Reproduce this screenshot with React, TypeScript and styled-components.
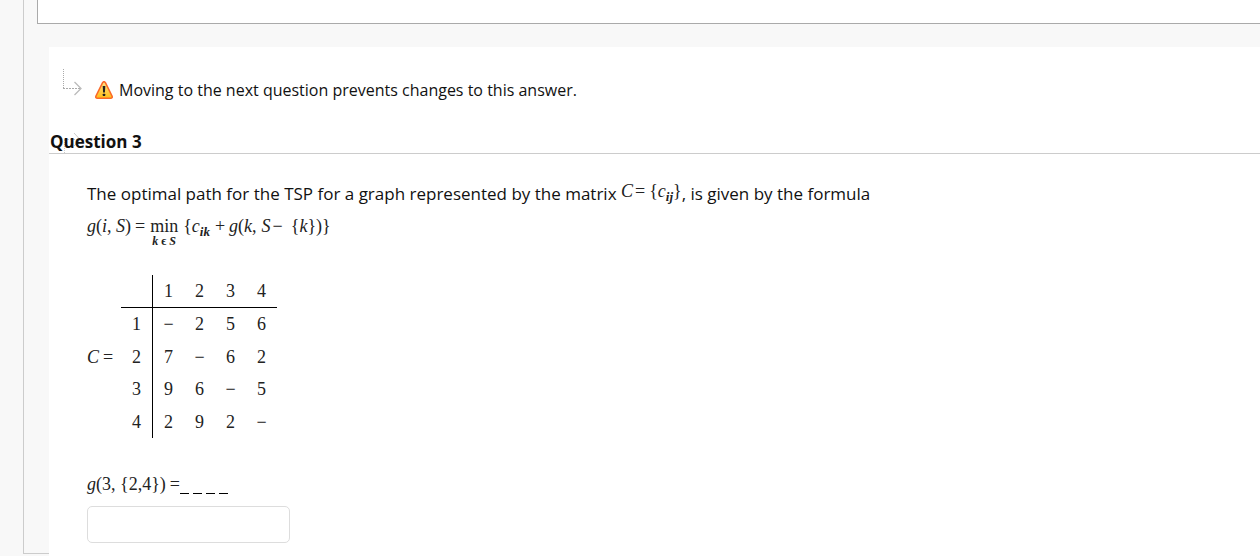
import React from "react";
import styled, { createGlobalStyle } from "styled-components";

const GlobalStyle = createGlobalStyle`
  * { box-sizing: border-box; }
  body {
    margin: 0;
    background: #f8f8f8;
    color: #111;
    font: 16px/24px "Open Sans", sans-serif;
  }
`;

const Page = styled.div`
  padding: 0 0 2px 23px;
  overflow: hidden;
`;

const Frame = styled.main`
  border-left: 1px solid #ccc;
  border-bottom: 1px solid #ccc;
`;

const StatusPanel = styled.section`
  height: 24px;
  margin-left: 13px;
  background: #fff;
  border-left: 1px solid #aaa;
  border-bottom: 1px solid #aaa;
`;

const QuestionCard = styled.section`
  margin: 23px 0 -3px 25px;
  padding-top: 22px;
  background: #fff;
`;

const Notice = styled.div`
  display: flex;
  align-items: flex-start;
  height: 58px;
  padding-left: 13px;
`;

const NoticeText = styled.p`
  display: flex;
  align-items: center;
  gap: 6px;
  margin: 9px 0 0 13px;
`;

const TitleBar = styled.header`
  display: flex;
  align-items: flex-end;
  position: relative;
  height: 27px;
  border-bottom: 1px solid #ccc;
`;

const TitleArrow = styled.svg`
  position: absolute;
  left: 14px;
  bottom: 0;
`;

const Title = styled.h1`
  position: relative;
  margin: 0;
  padding-left: 1px;
  font-size: 17px;
  line-height: 22px;
`;

const Body = styled.div`
  padding: 28px 0 13px 38px;
`;

const Prompt = styled.p`
  margin: 0;
  font-size: 17px;
`;

const MathText = styled.span`
  display: inline-flex;
  align-items: baseline;
  color: #222;
  font: 18px/24px "Liberation Serif", serif;
  white-space: pre;

  sub {
    font-size: 13px;
    font-weight: bold;
    line-height: 12px;
    position: relative;
    top: 4px;
    vertical-align: baseline;
  }
`;

const InlineMath = styled(MathText)`
  position: relative;
  top: -3px;
`;

const Formula = styled.div`
  display: flex;
  height: 30px;
  margin-top: 8px;
`;

const Group = styled.span<{ $before?: number }>`
  margin-left: ${(p) => p.$before ?? 0}px;
`;

const Min = styled.span`
  display: inline-flex;
  flex-direction: column;
  align-items: center;
  margin: 0 5px;

  small {
    margin-top: -2px;
    font-size: 12px;
    font-weight: bold;
    line-height: 10px;
  }
`;

const MatrixRow = styled.div`
  display: flex;
  align-items: center;
  margin-top: 31px;
`;

const MatrixName = styled(MathText)`
  width: 34px;
`;

const Matrix = styled.table`
  border-collapse: separate;
  border-spacing: 0;
  table-layout: fixed;
  width: 156px;
  height: 163px;
  color: #222;
  font: 18px/24px "Liberation Serif", serif;
`;

const Cell = styled.td`
  height: 32px;
  padding: 0;
  text-align: center;
`;

const HeadCell = styled.th<{ $right?: boolean; $bottom?: boolean }>`
  height: ${(p) => (p.$bottom ? 33 : 32)}px;
  width: ${(p) => (p.$right ? 32 : 31)}px;
  padding: 0;
  font-weight: normal;
  border-right: ${(p) => (p.$right ? "1px solid #000" : "0")};
  border-bottom: ${(p) => (p.$bottom ? "1px solid #000" : "0")};
`;

const AnswerLabel = styled.label`
  display: block;
  width: fit-content;
  margin-top: 34px;
`;

const Blank = styled.span`
  display: inline-flex;
  gap: 4px;

  i {
    width: 9px;
    height: 1px;
    background: #000;
    position: relative;
    top: 4px;
  }
`;

const AnswerInput = styled.input`
  display: block;
  width: 203px;
  height: 37px;
  margin-top: 10px;
  padding: 0 10px;
  background: #fff;
  border: 1px solid #ddd;
  border-radius: 5px;
  font: inherit;
`;

const digits = [1, 2, 3, 4];
const costs = [
  ["−", 2, 5, 6],
  [7, "−", 6, 2],
  [9, 6, "−", 5],
  [2, 9, 2, "−"],
];

const DownArrow = () => (
  <svg width="20" height="28" viewBox="0 0 20 28" fill="none" stroke="#aaa" aria-hidden="true">
    <path d="M1.500 0V20" strokeDasharray="1 1" />
    <path d="M1 19.500H18" strokeDasharray="2 1" />
    <path d="M12.500 13L19 19.500L12.500 26" stroke="#bbb" strokeWidth="1.300" />
  </svg>
);

const WarningIcon = () => (
  <svg width="18" height="18" viewBox="0 0 18 18" role="img" aria-label="Warning">
    <defs>
      <linearGradient id="warn" x1="0" y1="0" x2="0" y2="1">
        <stop offset="0" stopColor="#ffe58a" />
        <stop offset="1" stopColor="#ffbd16" />
      </linearGradient>
    </defs>
    <path
      d="M7.600 1.700Q9-.300 10.400 1.700L17 15Q17.800 17.200 15.600 17.200H2.400Q.200 17.200 1 15Z"
      fill="url(#warn)"
      stroke="#fb6a28"
      strokeWidth="1.600"
    />
    <path d="M7.700 5H10.300L9.900 11.500H8.100Z" fill="#222" />
    <rect x="7.800" y="12.700" width="2.400" height="2.300" rx=".6" fill="#222" />
  </svg>
);

export default function App() {
  return (
    <>
      <GlobalStyle />
      <Page>
        <Frame>
          <StatusPanel />
          <QuestionCard>
            <Notice>
              <DownArrow />
              <NoticeText>
                <WarningIcon />
                Moving to the next question prevents changes to this answer.
              </NoticeText>
            </Notice>
            <TitleBar>
              <TitleArrow width="20" height="20" fill="none" stroke="#ccc" aria-hidden="true">
                <path d="M1.500 7V20" strokeDasharray="1 1" />
                <path d="M1 6.500H16" strokeDasharray="2 1" />
                <path d="M11 0L17 6.500L11 13" />
              </TitleArrow>
              <Title>Question 3</Title>
            </TitleBar>
            <Body>
              <Prompt>
                The optimal path for the TSP for a graph represented by the matrix{" "}
                <InlineMath>
                  <i>C</i>
                  <Group $before={2}>=</Group>
                  <Group $before={4}>{"{"}</Group>
                  <i>c</i>
                  <sub><i>ij</i></sub>
                  {"}"}
                </InlineMath>
                , is given by the formula
              </Prompt>
              <Formula>
                <MathText>
                  <span><i>g</i>(<i>i</i>, <i>S</i>)</span>
                  <Group $before={4}>=</Group>
                  <Min>
                    min
                    <small><i>k</i> ϵ <i>S</i></small>
                  </Min>
                  <span>{"{"}<i>c</i></span>
                  <sub><i>ik</i></sub>
                  <Group $before={5}>+</Group>
                  <Group $before={4}><i>g</i>(<i>k</i>,</Group>
                  <Group $before={5}><i>S</i></Group>
                  <Group $before={2}>−</Group>
                  <Group $before={8}>{"{"}<i>k</i>{"})}"}</Group>
                </MathText>
              </Formula>
              <MatrixRow>
                <MatrixName>
                  <i>C</i>
                  <Group $before={4}>=</Group>
                </MatrixName>
                <Matrix aria-label="Cost matrix C">
                  <thead>
                    <tr>
                      <HeadCell $right $bottom />
                      {digits.map((d) => (
                        <HeadCell key={d} $bottom scope="col">{d}</HeadCell>
                      ))}
                    </tr>
                  </thead>
                  <tbody>
                    {costs.map((row, r) => (
                      <tr key={r}>
                        <HeadCell $right scope="row">{r + 1}</HeadCell>
                        {row.map((cost, c) => (
                          <Cell key={c}>{cost}</Cell>
                        ))}
                      </tr>
                    ))}
                  </tbody>
                </Matrix>
              </MatrixRow>
              <AnswerLabel htmlFor="answer">
                <MathText>
                  <span><i>g</i>(3, {"{2,4})"}</span>
                  <Group $before={4}>=</Group>
                  <Blank aria-label="blank"><i /><i /><i /><i /></Blank>
                </MathText>
              </AnswerLabel>
              <AnswerInput id="answer" type="text" autoComplete="off" />
            </Body>
          </QuestionCard>
        </Frame>
      </Page>
    </>
  );
}
